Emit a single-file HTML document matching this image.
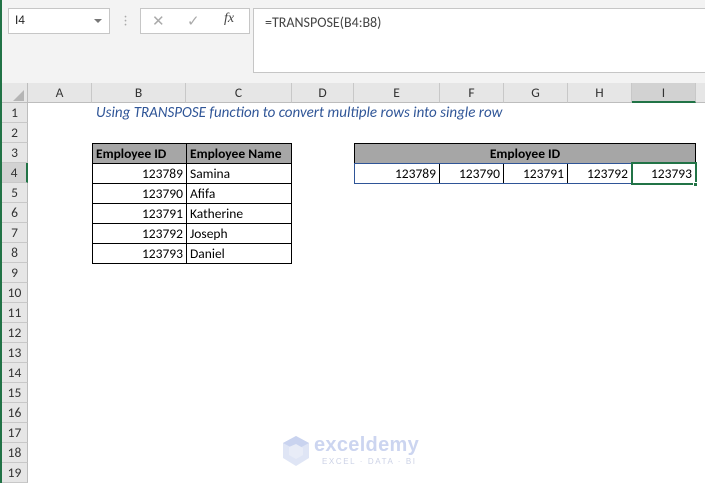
<!DOCTYPE html>
<html><head><style>
*{margin:0;padding:0;box-sizing:border-box}
body{width:705px;height:483px;overflow:hidden;background:#fff;font-family:Calibri,"Liberation Sans",sans-serif;position:relative}
.a{position:absolute}
.top{left:0;top:0;width:705px;height:83px;background:#f3f3f3}
.ch{position:absolute;top:83px;height:20px;background:#e6e6e6;border-right:1px solid #c8c8c8;border-bottom:1px solid #bdbdbd;font-size:13.5px;color:#333;text-align:center;line-height:20px}
.rh{position:absolute;left:2px;width:26px;height:20px;background:#e6e6e6;border-bottom:1px solid #c8c8c8;border-right:1px solid #bdbdbd;font-size:13.5px;color:#333;text-align:center;line-height:20px}
.c{position:absolute;height:20px;line-height:19px;font-size:13.5px;color:#000;background:#fff;padding:0 3px;white-space:nowrap;overflow:hidden}
</style></head><body>
<div class="a top"></div>
<div class="a" style="left:0;top:0;width:2px;height:483px;background:#217346"></div>
<div class="a" style="left:8px;top:8px;width:102px;height:26px;background:#fff;border:1px solid #c6c6c6;font-size:13px;line-height:24px;padding-left:6px;color:#222">I4</div>
<div class="a" style="left:94px;top:19px;width:0;height:0;border-left:4px solid transparent;border-right:4px solid transparent;border-top:4px solid #777"></div>
<div class="a" style="left:124px;top:15px;color:#aaa;font-size:12px;line-height:4px">·<br>·<br>·</div>
<div class="a" style="left:140px;top:8px;width:110px;height:26px;background:#fff;border:1px solid #c6c6c6"></div>
<div class="a" style="left:152px;top:12px;color:#aaa;font-size:15px">✕</div>
<div class="a" style="left:187px;top:12px;color:#aaa;font-size:15px">✓</div>
<div class="a" style="left:224px;top:11px;color:#444;font-size:14px;font-style:italic;font-family:'Liberation Serif',serif">fx</div>
<div class="a" style="left:253px;top:8px;width:460px;height:65px;background:#fff;border:1px solid #c6c6c6;font-size:14px;padding:5px 0 0 11px;color:#444">=TRANSPOSE(B4:B8)</div>

<div class="a" style="left:2px;top:83px;width:26px;height:20px;background:#e6e6e6;border-right:1px solid #bdbdbd;border-bottom:1px solid #bdbdbd"></div>
<div class="a" style="left:13px;top:90px;width:0;height:0;border-left:11px solid transparent;border-bottom:11px solid #b5b5b5"></div>
<div class="ch" style="left:28px;width:64px">A</div>
<div class="ch" style="left:92px;width:94px">B</div>
<div class="ch" style="left:186px;width:106px">C</div>
<div class="ch" style="left:292px;width:62px">D</div>
<div class="ch" style="left:354px;width:86px">E</div>
<div class="ch" style="left:440px;width:64px">F</div>
<div class="ch" style="left:504px;width:64px">G</div>
<div class="ch" style="left:568px;width:64px">H</div>
<div class="ch" style="left:632px;width:64px;background:#d2d2d2;border-bottom:2px solid #217346">I</div>
<div class="ch" style="left:696px;width:20px"></div>

<div class="rh" style="top:103px">1</div><div class="rh" style="top:123px">2</div><div class="rh" style="top:143px">3</div>
<div class="rh" style="top:163px;background:#d2d2d2;border-right:2px solid #217346">4</div>
<div class="rh" style="top:183px">5</div><div class="rh" style="top:203px">6</div><div class="rh" style="top:223px">7</div><div class="rh" style="top:243px">8</div><div class="rh" style="top:263px">9</div><div class="rh" style="top:283px">10</div><div class="rh" style="top:303px">11</div><div class="rh" style="top:323px">12</div><div class="rh" style="top:343px">13</div><div class="rh" style="top:363px">14</div><div class="rh" style="top:383px">15</div><div class="rh" style="top:403px">16</div><div class="rh" style="top:423px">17</div><div class="rh" style="top:443px">18</div><div class="rh" style="top:463px">19</div>

<div class="a" style="left:96px;top:104px;font-size:15px;font-style:italic;color:#2f5597;white-space:nowrap">Using TRANSPOSE function to convert multiple rows into single row</div>

<div class="a" style="left:92px;top:143px;width:200px;height:121px;border:1px solid #000;background:#000"></div>
<div class="c" style="left:93px;top:144px;width:93px;height:19px;background:#a6a6a6;font-weight:bold">Employee ID</div>
<div class="c" style="left:187px;top:144px;width:104px;height:19px;background:#a6a6a6;font-weight:bold">Employee Name</div>
<div class="c" style="left:93px;top:164px;width:93px;height:19px;text-align:right">123789</div><div class="c" style="left:187px;top:164px;width:104px;height:19px">Samina</div>
<div class="c" style="left:93px;top:184px;width:93px;height:19px;text-align:right">123790</div><div class="c" style="left:187px;top:184px;width:104px;height:19px">Afifa</div>
<div class="c" style="left:93px;top:204px;width:93px;height:19px;text-align:right">123791</div><div class="c" style="left:187px;top:204px;width:104px;height:19px">Katherine</div>
<div class="c" style="left:93px;top:224px;width:93px;height:19px;text-align:right">123792</div><div class="c" style="left:187px;top:224px;width:104px;height:19px">Joseph</div>
<div class="c" style="left:93px;top:244px;width:93px;height:19px;text-align:right">123793</div><div class="c" style="left:187px;top:244px;width:104px;height:19px">Daniel</div>

<div class="a" style="left:354px;top:143px;width:342px;height:21px;border:1px solid #000;background:#a6a6a6;font-weight:bold;font-size:13.5px;text-align:center;line-height:19px">Employee ID</div>
<div class="a" style="left:354px;top:163px;width:342px;height:21px;border:1px solid #2f5597;background:#000"></div>
<div class="c" style="left:355px;top:164px;width:84px;height:19px;text-align:right">123789</div>
<div class="c" style="left:440px;top:164px;width:63px;height:19px;text-align:right">123790</div>
<div class="c" style="left:504px;top:164px;width:63px;height:19px;text-align:right">123791</div>
<div class="c" style="left:568px;top:164px;width:63px;height:19px;text-align:right">123792</div>
<div class="c" style="left:632px;top:164px;width:63px;height:19px;text-align:right">123793</div>
<div class="a" style="left:631px;top:162px;width:66px;height:23px;border:2px solid #217346"></div>
<div class="a" style="left:693px;top:182px;width:5px;height:5px;background:#217346;border:1px solid #fff"></div>

<svg class="a" style="left:281px;top:435px" width="30" height="32" viewBox="0 0 30 32"><path d="M15 1 L28 8 L28 23 L15 31 L2 23 L2 8Z" fill="#dfe5f5"/><path d="M15 1 L28 8 L15 15 L2 8Z" fill="#c9d3ef"/><path d="M8 12 L15 9 L22 13 L22 20 L15 24 L8 20Z" fill="#e8ecf7"/></svg>
<div class="a" style="left:314px;top:434px;font-size:20px;font-weight:bold;color:#ccd5f0;letter-spacing:0.3px;font-family:'Liberation Sans',sans-serif">exceldemy</div>
<div class="a" style="left:322px;top:457px;font-size:8px;color:#ccd2e6;letter-spacing:1.6px;font-family:'Liberation Sans',sans-serif">EXCEL · DATA · BI</div>
</body></html>
